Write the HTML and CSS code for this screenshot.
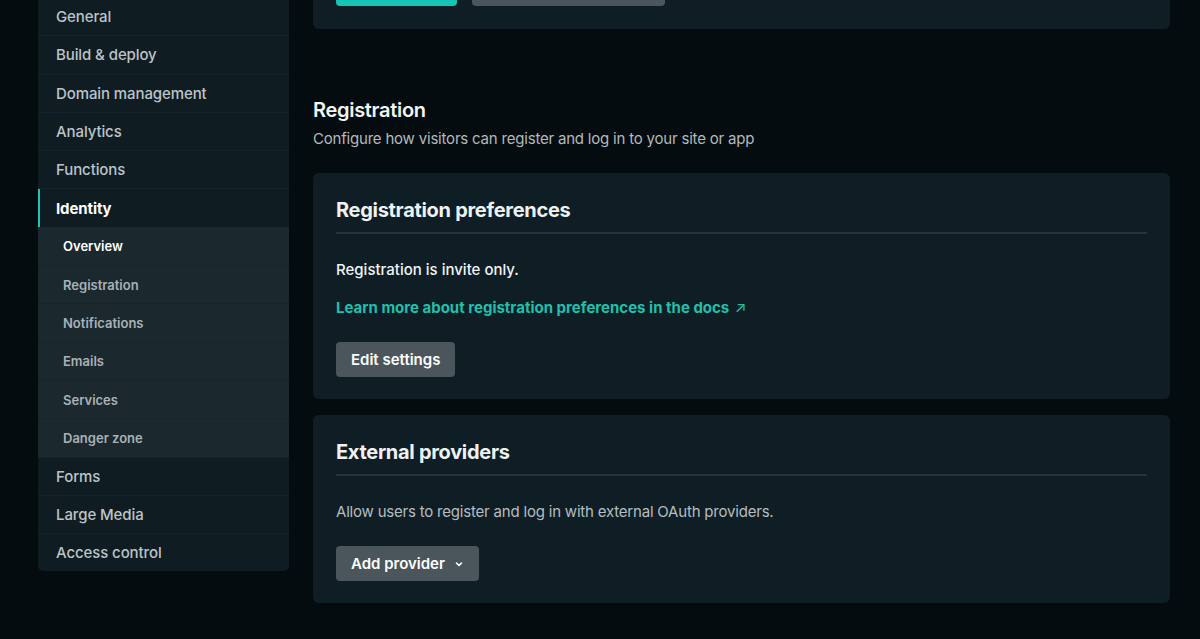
FILE: index.html
```html
<!DOCTYPE html>
<html>
<head>
<meta charset="utf-8">
<link rel="stylesheet" href="styles.css">
</head>
<body>
<div class="layout">
  <nav class="sidebar">
    <a class="item">General</a>
    <a class="item">Build &amp; deploy</a>
    <a class="item">Domain management</a>
    <a class="item">Analytics</a>
    <a class="item">Functions</a>
    <a class="item active">Identity</a>
    <div class="sub">
      <a class="subitem current">Overview</a>
      <a class="subitem">Registration</a>
      <a class="subitem">Notifications</a>
      <a class="subitem">Emails</a>
      <a class="subitem">Services</a>
      <a class="subitem">Danger zone</a>
    </div>
    <a class="item">Forms</a>
    <a class="item">Large Media</a>
    <a class="item last">Access control</a>
  </nav>
  <main class="main">
    <section class="card topcard">
      <div class="btnrow">
        <span class="btn teal"></span>
        <span class="btn grey wide"></span>
      </div>
    </section>
    <header class="section-head">
      <h2>Registration</h2>
      <p>Configure how visitors can register and log in to your site or app</p>
    </header>
    <section class="card">
      <h3>Registration preferences</h3>
      <p class="strong">Registration is invite only.</p>
      <p><a class="link">Learn more about registration preferences in the docs <span class="arrow">↗</span></a></p>
      <button class="btn grey">Edit settings</button>
    </section>
    <section class="card">
      <h3>External providers</h3>
      <p class="muted">Allow users to register and log in with external OAuth providers.</p>
      <button class="btn grey">Add provider
        <svg class="chev" width="10" height="10" viewBox="0 0 10 10"><path d="M2.5 4 L5 6.5 L7.5 4" fill="none" stroke="#fff" stroke-width="1.6" stroke-linecap="round" stroke-linejoin="round"/></svg>
      </button>
    </section>
  </main>
</div>
</body>
</html>
```
FILE: styles.css
```css
* { box-sizing: border-box; }
html, body { margin: 0; padding: 0; }
body {
  background: #050c0f;
  font-family: Inter, "Noto Sans", sans-serif;
  color: #e9eef0;
  height: 639px;
  overflow: hidden;
}
.layout {
  display: flex;
  gap: 24px;
  padding: 0 30px 0 38px;
  align-items: flex-start;
}
.sidebar {
  width: 251px;
  flex: none;
  background: #0f1c22;
  border-radius: 5px;
  display: flex;
  flex-direction: column;
  overflow: hidden;
  margin-top: -3px;
}
.item {
  height: 38.3px;
  display: flex;
  align-items: center;
  padding-left: 18px;
  font-size: 15px;
  font-weight: 500;
  color: #bcc4c8;
  border-top: 1px solid #15242a;
  letter-spacing: -0.1px;
}
.item:first-child { border-top: none; }
.item.active {
  color: #ffffff;
  font-weight: 700;
  box-shadow: inset 2px 0 0 #1fc4b3;
}
.sub { background: #1b292f; }
.subitem {
  height: 38.3px;
  display: flex;
  align-items: center;
  padding-left: 25px;
  font-size: 13px;
  font-weight: 600;
  color: #a9b2b6;
  border-top: 1px solid #17252b;
}
.subitem:first-child { border-top: none; }
.subitem.current { color: #ffffff; }
.main {
  flex: 1;
  display: flex;
  flex-direction: column;
  margin-top: -42px;
}
.card {
  background: #0f1e25;
  border-radius: 6px;
  padding: 25px 23px 22px;
  margin-bottom: 16px;
}
.topcard {
  padding: 0 23px 23px;
  margin-bottom: 0;
}
.btnrow { display: flex; gap: 15px; padding-top: 13px; }
.btn {
  display: inline-flex;
  align-items: center;
  height: 35px;
  border-radius: 4px;
  border: none;
  font-family: inherit;
  font-size: 15px;
  font-weight: 600;
  color: #ffffff;
  padding: 0 15px;
}
.btn.teal { background: #14c4b4; width: 121px; }
.btn.grey { background: #4a565c; }
.btn.wide { width: 193px; }
.section-head { padding: 69px 0 25px; }
.section-head h2 {
  margin: 0;
  font-size: 20px;
  font-weight: 600;
  color: #f2f5f6;
  letter-spacing: -0.3px;
}
.section-head p {
  margin: 7px 0 0;
  font-size: 15px;
  color: #b2babd;
  letter-spacing: -0.2px;
}
.card h3 {
  margin: 0;
  font-size: 20px;
  font-weight: 700;
  color: #eef2f3;
  letter-spacing: -0.3px;
  padding-bottom: 10px;
  border-bottom: 2px solid #27353b;
}
.card p {
  margin: 0;
  font-size: 15px;
  line-height: 20px;
}
.card h3 + p { margin-top: 26px; }
.strong { color: #f1f4f5; font-weight: 500; }
.muted { color: #b5bdc1; letter-spacing: -0.2px; }
.card p + p { margin-top: 18px; }
.link { color: #21bfac; font-weight: 700; }
.arrow { font-size: 15px; font-weight: 400; margin-left: 2px; }
.card p + .btn { margin-top: 24px; }
.chev { margin-left: 9px; }
```
